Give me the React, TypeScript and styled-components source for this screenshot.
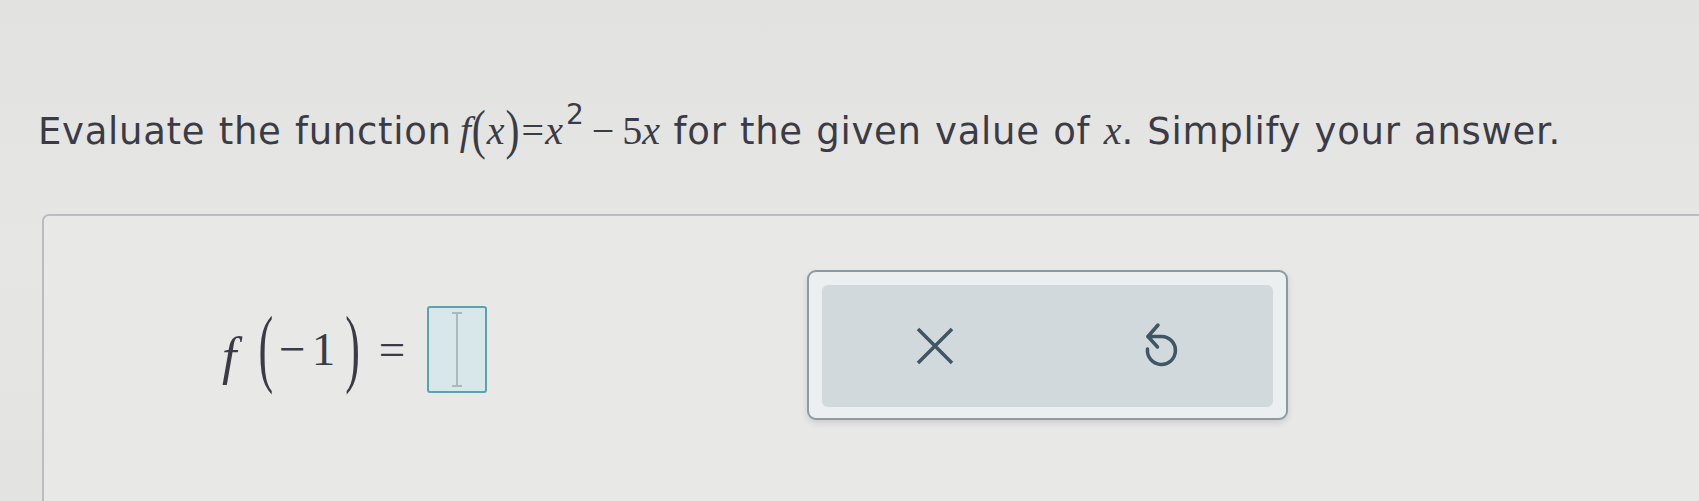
import React from "react";
import styled, { createGlobalStyle } from "styled-components";

const GlobalStyle = createGlobalStyle`
  html, body {
    margin: 0;
    padding: 0;
    background: #e4e4e3;
  }
  #root {
    min-height: 501px;
  }
`;

const Page = styled.div`
  height: 501px;
  overflow: hidden;
  padding: 99px 0 0 38px;
  box-sizing: border-box;
  background: linear-gradient(180deg, #e2e2e1 0%, #e6e6e5 50%, #e3e3e2 100%);
`;

const Question = styled.p`
  margin: 0;
  font-family: "DejaVu Sans", Verdana, sans-serif;
  font-size: 37px;
  letter-spacing: 0.7px;
  word-spacing: 1px;
  line-height: 44px;
  color: #3b3b46;
  white-space: nowrap;
`;

const MathRun = styled.span`
  font-family: "Liberation Serif", "Times New Roman", serif;
  font-size: 40px;
  letter-spacing: 0;
  margin-left: 8px;
`;

const Var = styled.i`
  font-style: italic;
  font-family: "Liberation Serif", "Times New Roman", serif;
  font-size: 40px;
  letter-spacing: 0;
`;

const Paren = styled.span`
  display: inline-block;
  font-size: 42px;
  transform: scaleY(1.3);
  margin: 0 1px;
`;

const Sup = styled.sup`
  font-family: "DejaVu Sans", sans-serif;
  font-size: 28px;
  position: relative;
  top: -6px;
  margin-left: 3px;
`;

const Op = styled.span<{ $gap: number }>`
  margin: 0 ${(p) => p.$gap}px;
`;

const Panel = styled.section`
  margin: 60px -30px 0 4px;
  height: 330px;
  border: 2px solid #b9bcc0;
  border-radius: 7px;
  background: #e8e8e7;
  box-sizing: border-box;
  padding: 54px 0 0 178px;
`;

const Row = styled.div`
  display: flex;
  align-items: center;
`;

const Expr = styled.div`
  display: flex;
  align-items: center;
  font-family: "Liberation Serif", "Times New Roman", serif;
  font-size: 47px;
  color: #3b3b46;
  transform: translateY(4px);
`;

const Fn = styled.i`
  font-style: italic;
  font-size: 52px;
  margin-right: 22px;
  transform: translateY(7px);
`;

const BigParen = styled.span<{ $side: "l" | "r" }>`
  display: inline-block;
  font-size: 44px;
  transform: scaleY(1.95);
  line-height: 1;
  margin-left: ${(p) => (p.$side === "r" ? 10 : 0)}px;
`;

const Minus = styled.span`
  margin: 0 6px 0 6px;
`;

const Equals = styled.span`
  margin: 0 22px 0 19px;
`;

const AnswerBox = styled.div`
  width: 60px;
  height: 87px;
  box-sizing: border-box;
  border: 2px solid #5aa3ae;
  border-radius: 3px;
  background: #d8e7e9;
  display: flex;
  justify-content: center;
  align-items: center;
`;

const Caret = styled.div`
  width: 2px;
  height: 75px;
  background: #a9babf;
  position: relative;
  &::before,
  &::after {
    content: "";
    position: absolute;
    left: -4px;
    width: 10px;
    height: 2px;
    background: #a9babf;
  }
  &::before {
    top: 0;
  }
  &::after {
    bottom: 0;
  }
`;

const Tools = styled.div`
  margin-left: 320px;
  width: 481px;
  height: 150px;
  box-sizing: border-box;
  border: 2px solid #8d99a3;
  border-radius: 9px;
  background: #ecefef;
  padding: 13px 13px 11px;
  box-shadow: 0 3px 6px rgba(80, 90, 100, 0.18);
`;

const ToolInner = styled.div`
  height: 100%;
  border-radius: 6px;
  background: #d2d9dc;
  display: grid;
  grid-template-columns: 1fr 1fr;
`;

const ToolButton = styled.button`
  border: none;
  background: transparent;
  display: flex;
  align-items: center;
  justify-content: center;
  padding: 0;
  color: #3f5664;
  cursor: pointer;
`;

function ClearIcon() {
  return (
    <svg width="38" height="38" viewBox="0 0 38 38" fill="none">
      <path d="M2 2 L36 36 M36 2 L2 36" stroke="currentColor" strokeWidth="3.5" />
    </svg>
  );
}

function UndoIcon() {
  return (
    <svg width="42" height="50" viewBox="0 0 42 50" fill="none">
      <path d="M18 4 L8 15.5 L17.5 26" stroke="currentColor" strokeWidth="3.5" strokeLinejoin="round" strokeLinecap="round" />
      <path d="M8 15.5 H21.5 A14 14 0 1 1 7.5 28" stroke="currentColor" strokeWidth="3.5" strokeLinecap="round" />
    </svg>
  );
}

export default function App() {
  return (
    <>
      <GlobalStyle />
      <Page>
        <Question>
          Evaluate the function
          <MathRun>
            <Var>f</Var>
            <Paren>(</Paren>
            <Var>x</Var>
            <Paren>)</Paren>
            <Op $gap={1}>=</Op>
            <Var>x</Var>
            <Sup>2</Sup>
            <Op $gap={8}>−</Op>5<Var>x</Var>
          </MathRun>{" "}
          for the given value of <Var>x</Var>. Simplify your answer.
        </Question>

        <Panel>
          <Row>
            <Expr>
              <Fn>f</Fn>
              <BigParen $side="l">(</BigParen>
              <Minus>−</Minus>
              <span>1</span>
              <BigParen $side="r">)</BigParen>
              <Equals>=</Equals>
              <AnswerBox>
                <Caret />
              </AnswerBox>
            </Expr>

            <Tools>
              <ToolInner>
                <ToolButton aria-label="Clear">
                  <ClearIcon />
                </ToolButton>
                <ToolButton aria-label="Undo">
                  <UndoIcon />
                </ToolButton>
              </ToolInner>
            </Tools>
          </Row>
        </Panel>
      </Page>
    </>
  );
}
